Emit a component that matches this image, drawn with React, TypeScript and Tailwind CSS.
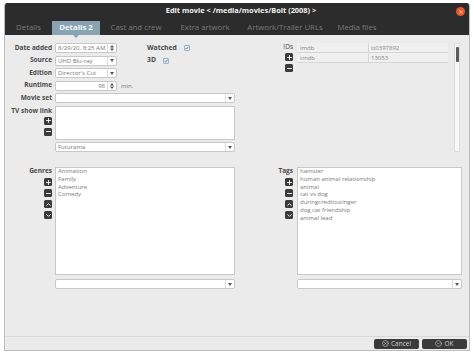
import { ChevronDown, ChevronUp, CircleCheck, CircleX, Minus, Plus, X } from "lucide-react";
import type { ReactNode } from "react";

const tabs: [string, string][] = [
    ["Details", "w-[47px]"],
    ["Details 2", "w-[48px]"],
    ["Cast and crew", "w-[72px]"],
    ["Extra artwork", "w-[66px]"],
    ["Artwork/Trailer URLs", "w-[94px]"],
    ["Media files", "w-[50px]"],
];
const genres = ["Animation", "Family", "Adventure", "Comedy"];
const tags = [
    "hamster",
    "human animal relationship",
    "animal",
    "cat vs dog",
    "duringcreditsstinger",
    "dog cat friendship",
    "animal lead",
];

function Arrow({ spin }: { spin?: boolean }) {
    return (
        <div className="flex h-full w-[9px] shrink-0 items-center justify-center border-l border-[#dcdcdc]">
            {spin ? (
                <svg width="4" height="6" viewBox="0 0 4 6">
                    <path d="M0 2.4 L2 0 L4 2.4Z M0 3.6 L2 6 L4 3.6Z" fill="#555" />
                </svg>
            ) : (
                <svg width="4" height="3" viewBox="0 0 4 3">
                    <path d="M0 0 L4 0 L2 3Z" fill="#555" />
                </svg>
            )}
        </div>
    );
}

function Field({ value, spin, right, className }: { value?: string; spin?: boolean; right?: boolean; className: string }) {
    return (
        <div className={`flex h-[10px] items-center overflow-hidden rounded-[2px] border border-[#c8c8c8] bg-white ${className}`}>
            <span className={`flex-1 whitespace-nowrap px-[2px] text-[6px] leading-none text-[#777] ${right ? "text-right" : ""}`}>
                {value}
            </span>
            <Arrow spin={spin} />
        </div>
    );
}

function Btn({ children }: { children: ReactNode }) {
    return (
        <div className="flex h-[8px] w-[8px] items-center justify-center rounded-[1.5px] bg-[#3b3b3b] text-white">
            {children}
        </div>
    );
}

function Check() {
    return (
        <div className="flex h-[6px] w-[6px] items-center justify-center rounded-[1px] border border-[#9db5cc] bg-[#e6eef6]">
            <svg width="4" height="4" viewBox="0 0 4 4">
                <path d="M0.5 2 L1.6 3.1 L3.6 0.6" stroke="#3f6fa3" strokeWidth="0.8" fill="none" />
            </svg>
        </div>
    );
}

function Row({ label, children }: { label: string; children: ReactNode }) {
    return (
        <div className="flex h-[10px] items-center gap-[3px]">
            <span className="w-[43px] whitespace-nowrap text-right text-[6.5px] font-bold leading-none text-[#4a4a4a]">
                {label}
            </span>
            {children}
        </div>
    );
}

function ListSide({ label, w }: { label: string; w: string }) {
    return (
        <div className={`${w} flex flex-col items-end gap-[3px]`}>
            <span className="text-[6.5px] font-bold leading-[8px] text-[#4a4a4a]">{label}</span>
            <Btn><Plus size={7} strokeWidth={3} /></Btn>
            <Btn><Minus size={7} strokeWidth={3} /></Btn>
            <Btn><ChevronUp size={7} strokeWidth={3} /></Btn>
            <Btn><ChevronDown size={7} strokeWidth={3} /></Btn>
        </div>
    );
}

function ListBox({ items, w }: { items: string[]; w: string }) {
    return (
        <div className={`h-[108px] ${w} border border-[#c8c8c8] bg-white px-[2px]`}>
            {items.map((g) => (
                <div key={g} className="whitespace-nowrap text-[6px] leading-[7.8px] text-[#7a7a7a]">{g}</div>
            ))}
        </div>
    );
}

export default function App() {
    return (
        <div className="h-[355px] w-[474px] bg-white px-[4px] pb-[4px] pt-[3px] font-['Open_Sans',sans-serif]">
            <div className="flex h-full flex-col overflow-hidden rounded-t-[3px] border border-t-0 border-[#bdbdbd]">
                {/* title */}
                <div className="relative flex h-[15px] shrink-0 items-center justify-center bg-[#2c2c2c] pl-[8px]">
                    <span className="text-[7.4px] font-bold text-[#f2f2f2]">Edit movie &lt; /media/movies/Bolt (2008) &gt;</span>
                    <div className="absolute right-[4px] top-[4px] flex h-[9px] w-[9px] items-center justify-center rounded-full bg-[#e7572a] text-[#fbd3c4]">
                        <X size={6} strokeWidth={3} />
                    </div>
                </div>

                {/* tabs */}
                <div className="flex h-[17px] shrink-0 items-end bg-[#2c2c2c]">
                    {tabs.map(([t, w]) =>
                        t === "Details 2" ? (
                            <div key={t} className={`relative flex h-[14px] ${w} items-center justify-center bg-[#8aa3b3] text-[7.8px] font-bold text-[#f3f6f8]`}>
                                {t}
                                <div className="absolute left-1/2 top-full h-0 w-0 -translate-x-1/2 border-x-[3px] border-t-[3px] border-x-transparent border-t-[#8aa3b3]" />
                            </div>
                        ) : (
                            <div key={t} className={`flex h-[14px] ${w} items-center justify-center whitespace-nowrap text-[7.8px] text-[#7b7b7b]`}>
                                {t}
                            </div>
                        )
                    )}
                </div>

                {/* content */}
                <div className="flex flex-1 flex-col bg-[#ebebeb] pl-[4px] pr-[7px] pt-[8px]">
                    <div className="flex h-[110px] justify-between">
                        <div className="flex w-[226px] flex-col gap-[2.5px]">
                            <Row label="Date added">
                                <Field value="8/29/20, 8:25 AM" spin className="w-[62px]" />
                                <span className="ml-[27px] text-[6.8px] font-bold leading-none text-[#4a4a4a]">Watched</span>
                                <div className="ml-[4px]"><Check /></div>
                            </Row>
                            <Row label="Source">
                                <Field value="UHD Blu-ray" className="w-[62px]" />
                                <span className="ml-[27px] text-[6.8px] font-bold leading-none text-[#4a4a4a]">3D</span>
                                <div className="ml-[4px]"><Check /></div>
                            </Row>
                            <Row label="Edition">
                                <Field value="Director's Cut" className="w-[62px]" />
                            </Row>
                            <Row label="Runtime">
                                <Field value="98" spin right className="w-[62px]" />
                                <span className="ml-[1px] text-[6px] leading-none text-[#777]">min.</span>
                            </Row>
                            <Row label="Movie set">
                                <Field className="w-[180px]" />
                            </Row>
                            <div className="flex gap-[3px]">
                                <div className="flex w-[43px] flex-col items-end">
                                    <span className="mt-[1px] whitespace-nowrap text-[6.5px] font-bold leading-[8px] text-[#4a4a4a]">TV show link</span>
                                    <div className="mt-[2px]"><Btn><Plus size={7} strokeWidth={3} /></Btn></div>
                                    <div className="mt-[3px]"><Btn><Minus size={7} strokeWidth={3} /></Btn></div>
                                </div>
                                <div className="h-[34px] w-[180px] border border-[#c8c8c8] bg-white" />
                            </div>
                            <div className="pl-[46px]">
                                <Field value="Futurama" className="w-[180px]" />
                            </div>
                        </div>

                        <div className="flex w-[189px] gap-[4px]">
                            <div className="flex w-[20px] flex-col items-end">
                                <span className="mt-[1px] text-[6.5px] leading-[6px] text-[#4a4a4a]">IDs</span>
                                <div className="mt-[3px]"><Btn><Plus size={7} strokeWidth={3} /></Btn></div>
                                <div className="mt-[3px]"><Btn><Minus size={7} strokeWidth={3} /></Btn></div>
                            </div>
                            <div className="w-[151px]">
                                {[["imdb", "tt0397892"], ["tmdb", "13053"]].map(([k, v]) => (
                                    <div key={k} className="flex h-[10px] border-b border-[#d6d6d6] bg-[#f0f0f0] text-[6px] leading-none text-[#888]">
                                        <span className="flex w-[72px] items-center border-r border-[#d6d6d6] pl-[3px]">{k}</span>
                                        <span className="flex items-center pl-[2px]">{v}</span>
                                    </div>
                                ))}
                            </div>
                            <div className="ml-[2px] h-[109px] w-[6px] rounded-[1px] border border-[#dcdcdc] bg-[#f7f7f7] pt-[3px]">
                                <div className="mx-auto h-[15px] w-[3px] rounded-[1px] bg-[#5a5a5a]" />
                            </div>
                        </div>
                    </div>

                    <div className="mt-[14px] flex justify-between">
                        <div className="w-[226px]">
                            <div className="flex gap-[3px]">
                                <ListSide label="Genres" w="w-[43px]" />
                                <ListBox items={genres} w="w-[180px]" />
                            </div>
                            <div className="mt-[4px] pl-[46px]">
                                <Field className="w-[180px]" />
                            </div>
                        </div>
                        <div className="w-[189px]">
                            <div className="flex gap-[4px]">
                                <ListSide label="Tags" w="w-[20px]" />
                                <ListBox items={tags} w="w-[165px]" />
                            </div>
                            <div className="mt-[4px] pl-[24px]">
                                <Field className="w-[165px]" />
                            </div>
                        </div>
                    </div>
                </div>

                {/* footer */}
                <div className="flex h-[14px] shrink-0 items-center justify-end gap-[3px] border-t border-[#d8d8d8] bg-[#ebebeb] pr-[2px]">
                    <div className="flex h-[10px] w-[45px] items-center justify-center gap-[2px] rounded-[2px] bg-[#3a3a3a] text-[6.5px] text-[#cfcfcf]">
                        <CircleX size={7} strokeWidth={2} />
                        Cancel
                    </div>
                    <div className="flex h-[10px] w-[45px] items-center justify-center gap-[2px] rounded-[2px] bg-[#3a3a3a] text-[6.5px] text-[#cfcfcf]">
                        <CircleCheck size={7} strokeWidth={2} />
                        OK
                    </div>
                </div>
            </div>
        </div>
    );
}
